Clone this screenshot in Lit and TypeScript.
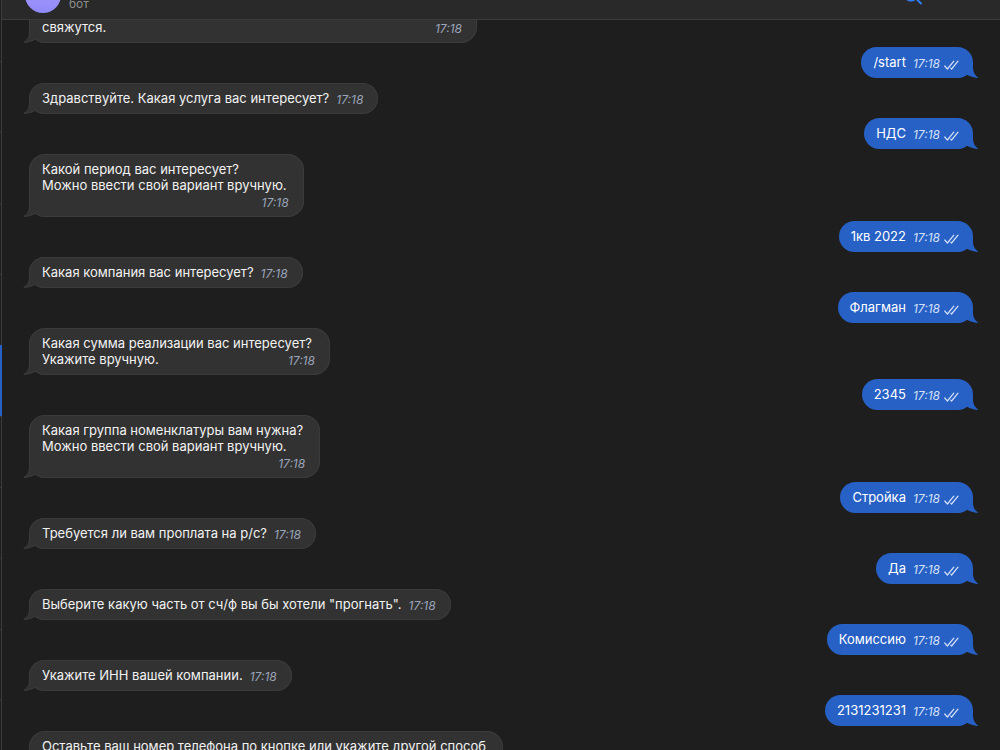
import { LitElement, html, css } from "lit";
import { customElement, property } from "lit/decorators.js";
import { classMap } from "lit/directives/class-map.js";

interface Message {
  text: string;
  out?: boolean;
  stamp?: "inline" | "corner" | "below";
  wide?: boolean;
}

const TIME = "17:18";

const MESSAGES: Message[] = [
  { text: "\nсвяжутся.", stamp: "corner", wide: true },
  { text: "/start", out: true },
  { text: "Здравствуйте. Какая услуга вас интересует?" },
  { text: "НДС", out: true },
  { text: "Какой период вас интересует?\nМожно ввести свой вариант вручную.", stamp: "below" },
  { text: "1кв 2022", out: true },
  { text: "Какая компания вас интересует?" },
  { text: "Флагман", out: true },
  { text: "Какая сумма реализации вас интересует?\nУкажите вручную.", stamp: "corner" },
  { text: "2345", out: true },
  { text: "Какая группа номенклатуры вам нужна?\nМожно ввести свой вариант вручную.", stamp: "below" },
  { text: "Стройка", out: true },
  { text: "Требуется ли вам проплата на р/с?" },
  { text: "Да", out: true },
  { text: 'Выберите какую часть от сч/ф вы бы хотели "прогнать".' },
  { text: "Комиссию", out: true },
  { text: "Укажите ИНН вашей компании." },
  { text: "2131231231", out: true },
  { text: "Оставьте ваш номер телефона по кнопке или укажите другой способ", stamp: "below" },
];

@customElement("chat-bubble")
export class ChatBubble extends LitElement {
  @property({ attribute: false }) message!: Message;

  static styles = css`
    :host {
      display: flex;
    }
    .bubble {
      position: relative;
      isolation: isolate;
      display: flex;
      box-sizing: border-box;
      margin-left: 27px;
      padding: 7px 15px 8px 13px;
      border-radius: 16px;
      background: #323232;
      box-shadow: inset 0 0 0 1px #3b3b3b;
      color: #f2f2f2;
    }
    .text {
      white-space: pre-line;
      font-size: 13px;
      line-height: 16px;
    }
    .stamp {
      display: flex;
      align-items: flex-end;
      gap: 4px;
      margin-left: 7px;
      padding-top: 4px;
      font-size: 12px;
      line-height: 12px;
      font-style: italic;
      color: #9aa4b8;
      white-space: nowrap;
    }
    .corner {
      display: grid;
    }
    .corner .text,
    .corner .stamp {
      grid-area: 1 / 1;
    }
    .corner .text {
      margin-right: 3px;
    }
    .corner .stamp {
      place-self: end;
    }
    .below {
      flex-direction: column;
    }
    .below .text {
      margin-right: 2px;
    }
    .below .stamp {
      align-self: flex-end;
    }
    .wide {
      width: 448px;
    }
    .out {
      margin-left: auto;
      margin-right: 27px;
      padding-left: 12px;
      padding-right: 14px;
      background: #2861c5;
      box-shadow: none;
      color: #fff;
    }
    .out .stamp {
      color: #d3e0f8;
    }
    .tail {
      position: absolute;
      z-index: -1;
      bottom: 0;
      left: -5px;
      width: 24px;
      height: 16px;
      overflow: visible;
    }
    .out .tail {
      left: auto;
      right: -5px;
      transform: scaleX(-1);
    }
    .tail-fill {
      fill: #323232;
    }
    .tail-line {
      fill: none;
      stroke: #3b3b3b;
    }
    .out .tail-fill {
      fill: #2861c5;
    }
    .out .tail-line {
      stroke: none;
    }
    .ticks {
      width: 15px;
      height: 10px;
      fill: none;
      stroke: #d3e0f8;
      stroke-width: 1.2;
      stroke-linecap: round;
      stroke-linejoin: round;
    }
  `;

  render() {
    const m = this.message;
    return html`
      <div
        class=${classMap({
          bubble: true,
          out: !!m.out,
          wide: !!m.wide,
          corner: m.stamp === "corner",
          below: m.stamp === "below",
        })}
      >
        <svg class="tail" viewBox="0 0 24 16" aria-hidden="true">
          <path class="tail-fill" d="M5 0V6C5 10.500 3 13.500 -.6 15.800C3 15.800 7.500 15 11.500 12.500C14.500 15 18 16 22 16V0Z" />
          <path class="tail-line" d="M5.500 0V6C5.500 10.500 3.500 13.300 -.2 15.300C3 15.300 7.500 14.500 11.500 12.100C14.500 14.500 18 15.500 22 15.500" />
        </svg>
        <span class="text">${m.text}</span>
        <span class="stamp">
          <time datetime=${TIME}>${TIME}</time>
          ${m.out
            ? html`<svg class="ticks" viewBox="0 0 15 10" aria-hidden="true">
                <path d="M.8 6 3.400 9 9.800 1.200M6.800 8.100 7.600 9 14 1.200" />
              </svg>`
            : null}
        </span>
      </div>
    `;
  }
}

@customElement("app-root")
export class AppRoot extends LitElement {
  static styles = css`
    :host {
      display: flex;
      height: 100vh;
      overflow: hidden;
      background: #1e1e1e;
      font-family: Inter, "Noto Sans", sans-serif;
    }
    .sidebar {
      flex: none;
      display: flex;
      flex-direction: column;
      box-sizing: border-box;
      width: 2px;
      padding-top: 61px;
      background: #1e1e1e;
      border-right: 1px solid #3b3b3b;
    }
    .row {
      flex: none;
      box-sizing: border-box;
      height: 71px;
      border-top: 1px solid #363636;
    }
    .row.selected {
      margin-right: -1px;
      background: #2861c5;
      border-color: #2861c5;
    }
    .pane {
      flex: 1;
      min-width: 0;
      display: flex;
      flex-direction: column;
    }
    .header {
      flex: none;
      display: flex;
      align-items: flex-end;
      box-sizing: border-box;
      height: 20px;
      overflow: hidden;
      padding: 0 76px 6px 23px;
      gap: 8px;
      background: #292929;
      border-bottom: 1px solid #3b3b3b;
    }
    .avatar {
      flex: none;
      width: 36px;
      height: 36px;
      border-radius: 50%;
      background: linear-gradient(#b29cff, #8f8af8);
    }
    .status {
      margin-bottom: 2px;
      font-size: 12px;
      line-height: 14px;
      color: #8d8d8d;
    }
    .search {
      margin-left: auto;
      margin-bottom: 8px;
      padding: 0;
      border: 0;
      background: none;
      line-height: 0;
      color: #2f7cf6;
    }
    .search svg {
      width: 20px;
      height: 20px;
      fill: none;
      stroke: currentColor;
      stroke-width: 2;
      stroke-linecap: round;
    }
    .history {
      flex: 1;
      min-height: 0;
      overflow: hidden;
    }
    .messages {
      display: flex;
      flex-direction: column;
      gap: 4px;
      margin: -24px 0 0;
      padding: 0;
      list-style: none;
    }
    .sent {
      padding-bottom: 1px;
    }
  `;

  render() {
    return html`
      <nav class="sidebar" aria-hidden="true">
        ${Array.from({ length: 10 }, (_, i) => html`<div class=${classMap({ row: true, selected: i === 4 })}></div>`)}
      </nav>
      <main class="pane">
        <header class="header">
          <div class="avatar"></div>
          <span class="status">бот</span>
          <button class="search" type="button" aria-label="Поиск">
            <svg viewBox="0 0 20 20"><circle cx="7" cy="9" r="6.500" /><path d="M12 13.500 17 18.500" /></svg>
          </button>
        </header>
        <section class="history">
          <ul class="messages">
            ${MESSAGES.map(
              (m) => html`<li class=${classMap({ sent: !!m.out })}><chat-bubble .message=${m}></chat-bubble></li>`
            )}
          </ul>
        </section>
      </main>
    `;
  }
}
